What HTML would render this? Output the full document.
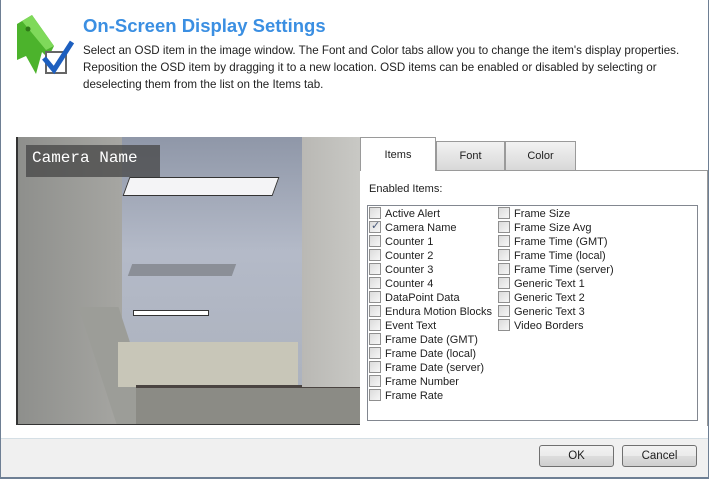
<!DOCTYPE html>
<html><head><style>
*{margin:0;padding:0;box-sizing:border-box}
body{width:709px;height:479px;background:#fff;font-family:"Liberation Sans",sans-serif;position:relative;overflow:hidden;color:#1e1e1e}
.win{position:absolute;left:0;top:0;width:709px;height:479px;border:1px solid #6e7f94;border-top:none}
.title{position:absolute;left:83px;top:15px;font-size:18.5px;font-weight:bold;color:#3b8fe2}
.desc{position:absolute;left:83px;top:42px;font-size:11.6px;line-height:17px;color:#222;width:625px}
.cam{position:absolute;left:16px;top:137px;width:344px;height:288px;background:linear-gradient(180deg,#8f97a8 0%,#b4bac8 40%,#aab0bb 100%);overflow:hidden;border-left:2px solid #333;border-bottom:1px solid #333}
.lbl{position:absolute;left:8px;top:8px;width:134px;height:32px;background:rgba(70,70,70,.75);color:#fff;font-family:"Liberation Mono",monospace;font-size:16px;padding:4px 6px}
.tab{position:absolute;height:33px;font-size:11px;text-align:center;line-height:34px;border:1px solid #9a9a9a;border-bottom:none;background:linear-gradient(#f2f2f2,#d8d8d8)}
.panel{position:absolute;left:360px;top:170px;width:348px;height:256px;border-top:1px solid #9a9a9a;border-right:1px solid #9a9a9a}
.list{position:absolute;left:367px;top:205px;width:331px;height:216px;border:1px solid #828790;background:#fff}
.it{position:absolute;font-size:11px;height:14px;line-height:14px;white-space:nowrap}
.cb{display:inline-block;width:12px;height:12px;border:1px solid #8f8f8f;background:linear-gradient(135deg,#dcdcdc,#f6f6f6);vertical-align:-2px;margin-right:4px;position:relative}
.footer{position:absolute;left:1px;top:438px;width:707px;height:40px;background:#f0f0f0;border-top:1px solid #d5dfe5;border-bottom:1px solid #6e7f94}
.btn{position:absolute;top:445px;width:75px;height:22px;border:1px solid #707070;border-radius:3px;background:linear-gradient(#f2f2f2 0%,#ebebeb 50%,#dddddd 51%,#cfcfcf 100%);font-size:11.5px;text-align:center;line-height:20px}
</style></head><body>
<div class="win"></div>
<svg style="position:absolute;left:14px;top:12px" width="60" height="64" viewBox="0 0 60 64">
<path d="M3 12 L18 3 L40 34 L34 46 L28 40 L22 62 L12 44 L3 48 Z" fill="#4cb32c"/>
<path d="M18 3 L40 34 L32 38 L8 9Z" fill="#7fd95a"/>
<circle cx="14" cy="17" r="2.5" fill="#2f7a18"/>
<rect x="32" y="40" width="20" height="21" fill="#fff" stroke="#666" stroke-width="2"/>
<path d="M30 46 L40 58 L58 30" stroke="#1d5fbf" stroke-width="5" fill="none"/>
</svg>
<div class="title">On-Screen Display Settings</div>
<div class="desc">Select an OSD item in the image window. The Font and Color tabs allow you to change the item's display properties. Reposition the OSD item by dragging it to a new location. OSD items can be enabled or disabled by selecting or deselecting them from the list on the Items tab.</div>
<div class="cam">
<div style="position:absolute;left:0;top:0;width:104px;height:288px;background:linear-gradient(90deg,#8e8f8c,#a6a6a2)"></div>
<div style="position:absolute;left:80px;top:170px;width:40px;height:120px;background:#9c9d98;transform:skewX(18deg)"></div>
<div style="position:absolute;left:108px;top:40px;width:150px;height:19px;background:#f4f4f6;border:1px solid #333;transform:skewX(-20deg)"></div>
<div style="position:absolute;left:112px;top:127px;width:104px;height:12px;background:#8b8f97;transform:skewX(-20deg)"></div>
<div style="position:absolute;left:115px;top:173px;width:76px;height:6px;background:#fff;border:1px solid #333"></div>
<div style="position:absolute;left:100px;top:205px;width:180px;height:45px;background:#c8c6b8"></div>
<div style="position:absolute;left:118px;top:248px;width:226px;height:40px;background:#8b8b85;border-top:3px solid #4a4441"></div>
<div style="position:absolute;left:284px;top:0;width:60px;height:250px;background:linear-gradient(90deg,#b9b8b4,#c9c9c5)"></div>
<div class="lbl">Camera Name</div>
</div>
<div class="panel"></div>
<div class="tab" style="left:360px;top:137px;width:76px;height:34px;background:#fff;z-index:2">Items</div>
<div class="tab" style="left:436px;top:141px;width:69px;height:29px;line-height:29px">Font</div>
<div class="tab" style="left:505px;top:141px;width:71px;height:29px;line-height:29px">Color</div>
<div style="position:absolute;left:369px;top:183px;font-size:11px">Enabled Items:</div>
<div class="list"></div>
<div class="it" style="left:369px;top:207px"><span class="cb"></span>Active Alert</div>
<div class="it" style="left:369px;top:221px"><span class="cb"><span style="position:absolute;left:1px;top:-3px;font-size:11px;color:#4a5a7a">✓</span></span>Camera Name</div>
<div class="it" style="left:369px;top:235px"><span class="cb"></span>Counter 1</div>
<div class="it" style="left:369px;top:249px"><span class="cb"></span>Counter 2</div>
<div class="it" style="left:369px;top:263px"><span class="cb"></span>Counter 3</div>
<div class="it" style="left:369px;top:277px"><span class="cb"></span>Counter 4</div>
<div class="it" style="left:369px;top:291px"><span class="cb"></span>DataPoint Data</div>
<div class="it" style="left:369px;top:305px"><span class="cb"></span>Endura Motion Blocks</div>
<div class="it" style="left:369px;top:319px"><span class="cb"></span>Event Text</div>
<div class="it" style="left:369px;top:333px"><span class="cb"></span>Frame Date (GMT)</div>
<div class="it" style="left:369px;top:347px"><span class="cb"></span>Frame Date (local)</div>
<div class="it" style="left:369px;top:361px"><span class="cb"></span>Frame Date (server)</div>
<div class="it" style="left:369px;top:375px"><span class="cb"></span>Frame Number</div>
<div class="it" style="left:369px;top:389px"><span class="cb"></span>Frame Rate</div>
<div class="it" style="left:498px;top:207px"><span class="cb"></span>Frame Size</div>
<div class="it" style="left:498px;top:221px"><span class="cb"></span>Frame Size Avg</div>
<div class="it" style="left:498px;top:235px"><span class="cb"></span>Frame Time (GMT)</div>
<div class="it" style="left:498px;top:249px"><span class="cb"></span>Frame Time (local)</div>
<div class="it" style="left:498px;top:263px"><span class="cb"></span>Frame Time (server)</div>
<div class="it" style="left:498px;top:277px"><span class="cb"></span>Generic Text 1</div>
<div class="it" style="left:498px;top:291px"><span class="cb"></span>Generic Text 2</div>
<div class="it" style="left:498px;top:305px"><span class="cb"></span>Generic Text 3</div>
<div class="it" style="left:498px;top:319px"><span class="cb"></span>Video Borders</div>
<div class="footer"></div>
<div class="btn" style="left:539px">OK</div>
<div class="btn" style="left:622px">Cancel</div>
</body></html>
